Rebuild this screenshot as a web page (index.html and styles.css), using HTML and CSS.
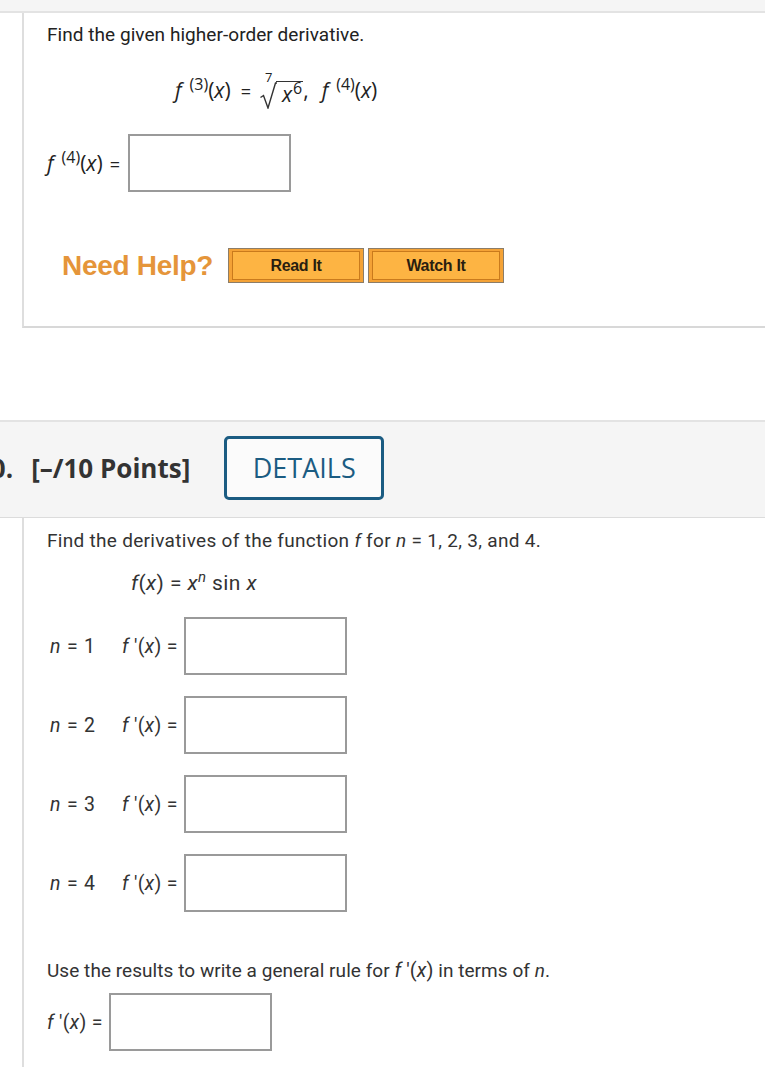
FILE: index.html
```html
<!DOCTYPE html>
<html>
<head>
<meta charset="utf-8">
<link rel="stylesheet" href="styles.css">
</head>
<body>
<div class="topband"></div>
<div class="q1">
  <p class="prompt">Find the given higher-order derivative.</p>
  <div class="given">
    <span class="m"><i>f</i><sup class="ord">(3)</sup>(<i>x</i>)<span class="eq">=</span><span class="root"><sup class="idx">7</sup><svg class="radsvg" width="17" height="28" viewBox="0 0 17 28"><path d="M0.5 16.5 L3.5 14.5 L8 27 L15.5 2 L17 2" fill="none" stroke="#333" stroke-width="1.4"/></svg><span class="under"><i>x</i><sup class="pw">6</sup></span></span>,<span class="sp"></span><i>f</i><sup class="ord">(4)</sup>(<i>x</i>)</span>
  </div>
  <div class="answer-row a1">
    <span class="m lbl"><i>f</i><sup class="ord">(4)</sup>(<i>x</i>)<span class="eq small">=</span></span>
    <span class="box"></span>
  </div>
  <div class="help">
    <span class="need">Need Help?</span>
    <span class="hbtn"><span class="hin">Read It</span></span>
    <span class="hbtn"><span class="hin">Watch It</span></span>
  </div>
</div>

<div class="qhead">
  <span class="num">10.</span>
  <span class="points">[–/10 Points]</span>
  <span class="details">DETAILS</span>
</div>

<div class="q2">
  <p class="prompt2">Find the derivatives of the function <i>f</i> for <i>n</i> = 1, 2, 3, and 4.</p>
  <p class="func"><i>f</i>(<i>x</i>) = <i>x</i><sup class="n"><i>n</i></sup> sin <i>x</i></p>
  <div class="rows">
    <div class="row"><span class="nlbl"><i>n</i> = 1</span><span class="flbl"><i>f</i> '(<i>x</i>) =</span><span class="box"></span></div>
    <div class="row"><span class="nlbl"><i>n</i> = 2</span><span class="flbl"><i>f</i> '(<i>x</i>) =</span><span class="box"></span></div>
    <div class="row"><span class="nlbl"><i>n</i> = 3</span><span class="flbl"><i>f</i> '(<i>x</i>) =</span><span class="box"></span></div>
    <div class="row"><span class="nlbl"><i>n</i> = 4</span><span class="flbl"><i>f</i> '(<i>x</i>) =</span><span class="box"></span></div>
  </div>
  <p class="prompt3">Use the results to write a general rule for <span class="big"><i>f</i> '(<i>x</i>)</span> in terms of <i>n</i>.</p>
  <div class="row last"><span class="flbl"><i>f</i> '(<i>x</i>) =</span><span class="box"></span></div>
</div>
</body>
</html>
```

FILE: styles.css
```css
* { box-sizing: border-box; }
body {
  margin: 0;
  background: #fff;
  font-family: Roboto, "Liberation Sans", sans-serif;
  color: #2b2b2b;
  overflow: hidden;
}
.topband {
  height: 13px;
  background: #f5f5f5;
  border-bottom: 2px solid #e3e3e3;
}
.q1 {
  margin-left: 22px;
  border-left: 2px solid #dedede;
  border-bottom: 2px solid #d8d8d8;
  padding: 11px 0 0 23px;
  height: 315px;
}
.prompt {
  margin: 0;
  font-size: 19px;
  letter-spacing: 0.05px;
  line-height: 22px;
  color: #222;
}
.m {
  font-family: "Open Sans", "DejaVu Sans", sans-serif;
  font-size: 21px;
  color: #222;
  white-space: nowrap;
}
.m i { font-style: italic; }
.given {
  margin: 24px 0 0 128px;
  height: 40px;
  line-height: 40px;
}
.ord {
  font-size: 16px;
  vertical-align: 8px;
  line-height: 0;
  margin-left: 8px;
}
.eq { margin: 0 9px 0 10px; font-size: 18px; }
.eq.small { margin: 0 0 0 7px; }
.root { display: inline-block; position: relative; line-height: 26px; vertical-align: -4px; }
.idx {
  position: absolute;
  left: 5px;
  top: -10px;
  font-size: 13px;
  line-height: 13px;
}
.radsvg { vertical-align: -7px; }
.under {
  display: inline-block;
  border-top: 1.4px solid #333;
  line-height: 24px;
  padding: 0 1px 0 6px;
  margin-left: -1px;
}
.pw { font-size: 16px; vertical-align: 8px; line-height: 0; margin-left: 1px; }
.sp { display: inline-block; width: 13px; }
.answer-row {
  display: flex;
  align-items: center;
}
.a1 { margin-top: 24px; }
.lbl { margin-right: 8px; }
.box {
  display: block;
  width: 163px;
  height: 58px;
  border: 2px solid #9a9a9a;
  background: #fff;
}
.help {
  display: flex;
  align-items: center;
  margin: 56px 0 0 15px;
}
.need {
  font-family: "Liberation Sans", Arial, sans-serif;
  font-weight: bold;
  font-size: 28px;
  color: #e5953a;
  margin-right: 15px;
  letter-spacing: -0.3px;
}
.hbtn {
  display: block;
  width: 136px;
  height: 35px;
  border: 1px solid #8c7d68;
  background: #f4a236;
  padding: 2px 3px;
  margin-right: 4px;
}
.hin {
  display: flex;
  align-items: center;
  justify-content: center;
  height: 100%;
  border: 1px solid #c97a1c;
  background: #fdb443;
  font-family: "Liberation Sans", Arial, sans-serif;
  font-weight: bold;
  font-size: 16px;
  color: #2a1e10;
  letter-spacing: -0.3px;
}
.qhead {
  margin-top: 92px;
  height: 98px;
  background: #f5f5f5;
  border-top: 2px solid #e3e3e3;
  border-bottom: 1px solid #dcdcdc;
  display: flex;
  align-items: center;
  padding-bottom: 4px;
  font-family: "Open Sans", sans-serif;
}
.num {
  font-weight: 700;
  font-size: 26px;
  color: #333;
  margin-left: -24px;
  margin-right: 18px;
}
.points {
  font-weight: 700;
  font-size: 26px;
  color: #333;
  margin-right: 34px;
}
.details {
  display: flex;
  align-items: center;
  justify-content: center;
  width: 160px;
  height: 64px;
  border: 3px solid #1b5c82;
  border-radius: 5px;
  font-size: 27px;
  color: #1b5c82;
  background: #fbfbfb;
}
.q2 {
  margin-left: 22px;
  border-left: 2px solid #dedede;
  padding: 11px 0 0 23px;
  height: 560px;
}
.prompt2, .prompt3 {
  margin: 0;
  font-size: 19px;
  letter-spacing: 0.3px;
  line-height: 24px;
  color: #333;
}
.prompt2 i, .prompt3 i { font-style: italic; }
.func {
  margin: 18px 0 0 84px;
  font-size: 21px;
  letter-spacing: 0.4px;
  line-height: 24px;
  color: #333;
}
.n { font-size: 15px; vertical-align: 8px; line-height: 0; }
.rows { margin-top: 22px; display: flex; flex-direction: column; gap: 21px; }
.row { display: flex; align-items: center; font-size: 19.5px; letter-spacing: 0.3px; color: #333; }
.nlbl { width: 75px; padding-left: 3px; word-spacing: 1px; }
.flbl { width: 62px; }
.prompt3 { margin-top: 46px; letter-spacing: 0.05px; }
.big { font-size: 20px; }
.last { margin-top: 10px; }
```
